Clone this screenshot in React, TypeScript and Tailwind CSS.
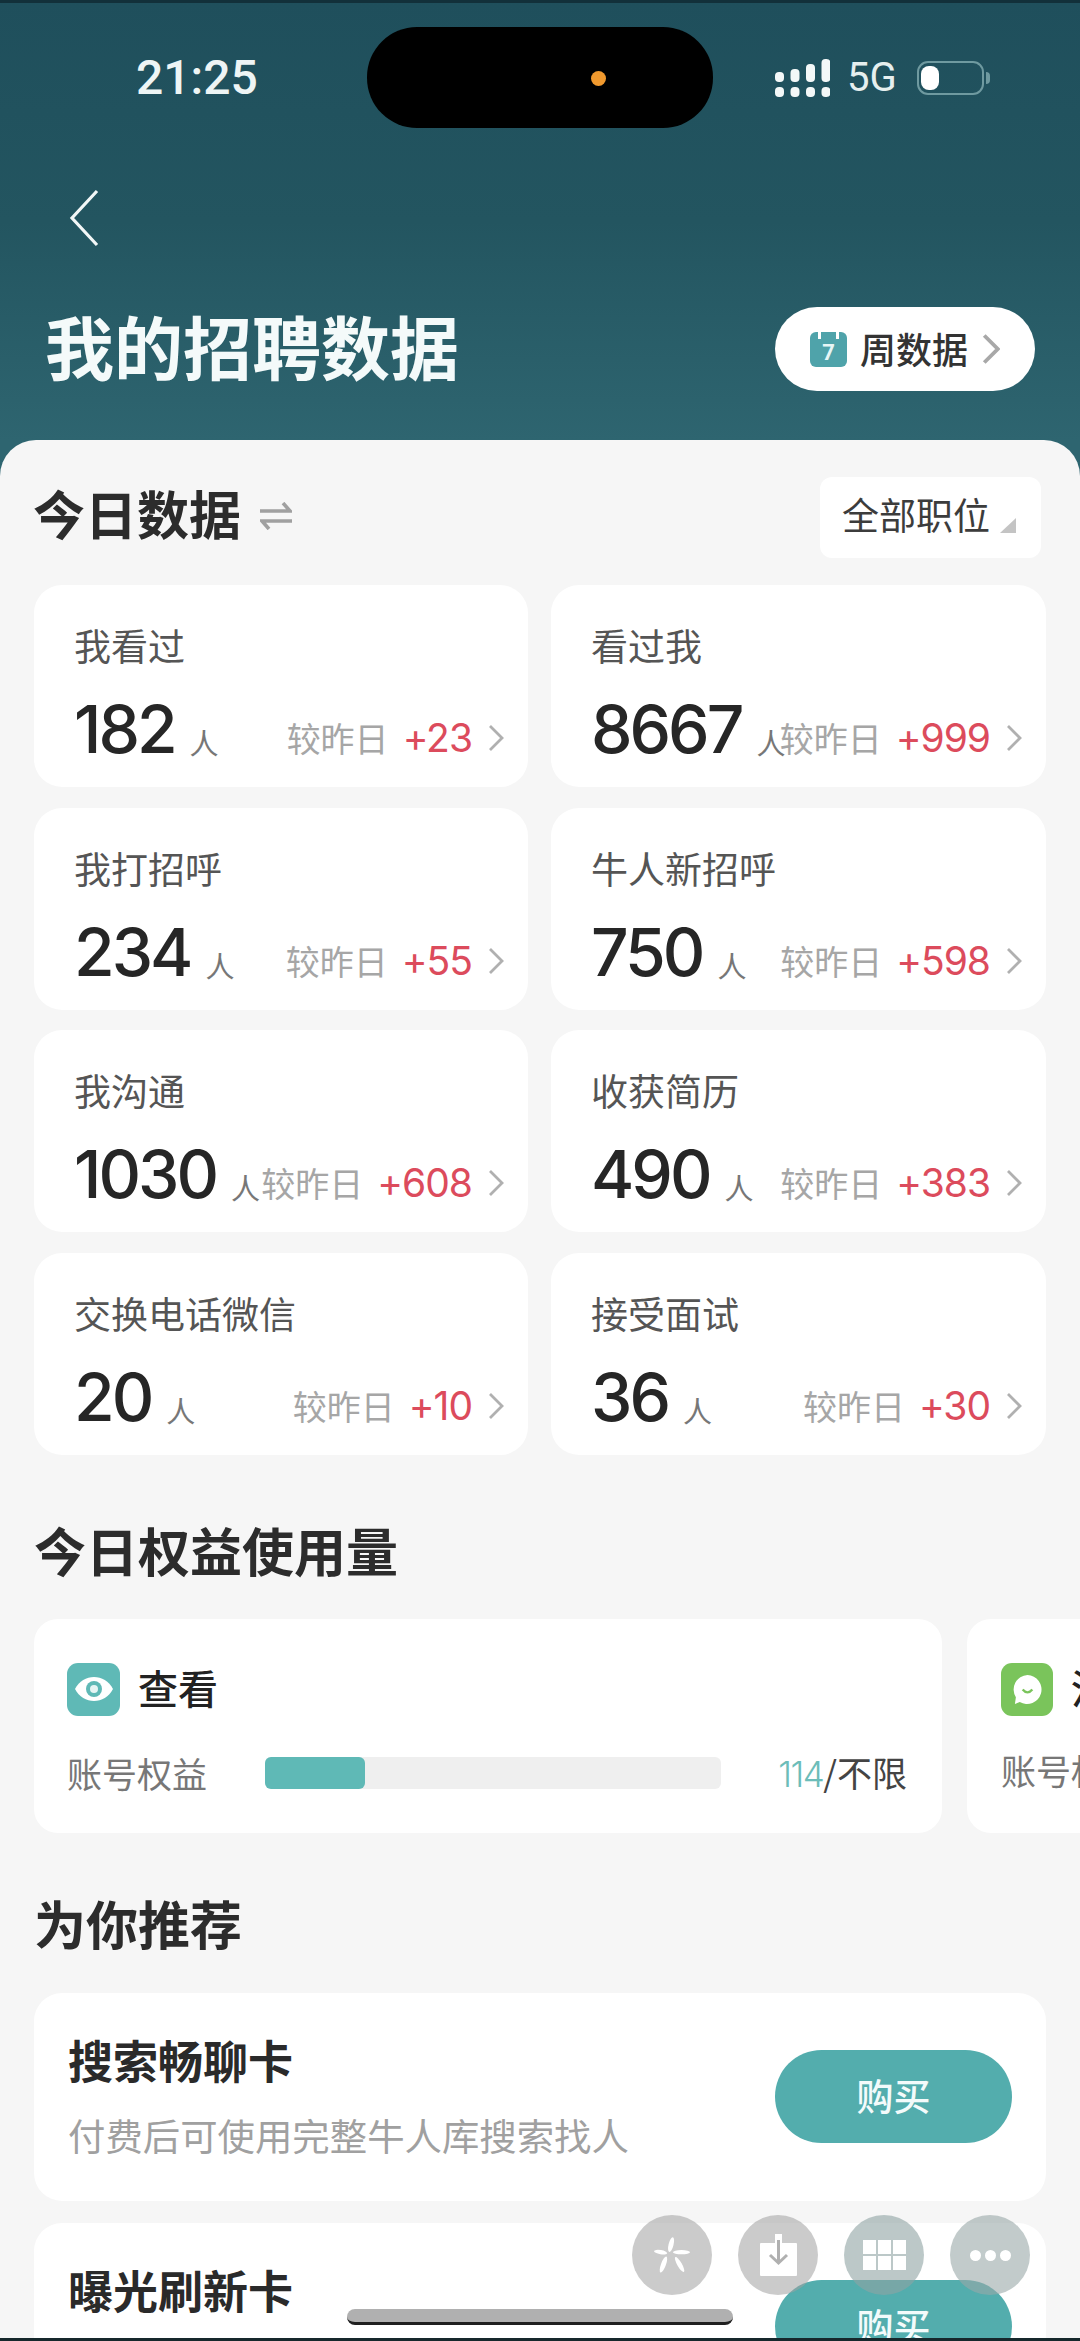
import * as React from 'react'

type Stat = { label: string; value: string; delta: string }

const stats: Stat[] = [
  { label: '我看过', value: '182', delta: '+23' },
  { label: '看过我', value: '8667', delta: '+999' },
  { label: '我打招呼', value: '234', delta: '+55' },
  { label: '牛人新招呼', value: '750', delta: '+598' },
  { label: '我沟通', value: '1030', delta: '+608' },
  { label: '收获简历', value: '490', delta: '+383' },
  { label: '交换电话微信', value: '20', delta: '+10' },
  { label: '接受面试', value: '36', delta: '+30' },
]

function Chevron({ className }: { className: string }) {
  return (
    <svg viewBox="0 0 16 28" className={className} fill="none" stroke="currentColor" strokeWidth="2.8">
      <path d="M2 2 L14 14 L2 26" />
    </svg>
  )
}

function StatusBar() {
  // top of the upper segment for each signal column
  const tops = [13, 10, 5, 0]
  return (
    <div className="flex h-[125px] items-center pt-[24px]">
      <span className="ml-[136px] w-[231px] font-['Roboto'] text-[48px] font-medium leading-none text-[#eef5f5]">21:25</span>
      <div className="relative h-[101px] w-[346px] rounded-[50px] bg-black">
        <div className="absolute left-[224px] top-[44px] h-[15px] w-[15px] rounded-full bg-[#f0992e]" />
      </div>
      <svg viewBox="0 0 55 38" className="ml-[62px] h-[38px] w-[55px]" fill="#f4f8f8">
        {tops.map((t, i) => (
          <g key={i}>
            <rect x={i * 15.5} y="28" width="9" height="10" rx="4" />
            <rect x={i * 15.5} y={t} width="9" height={23 - t} rx="4" />
          </g>
        ))}
      </svg>
      <span className="ml-[17px] font-['Roboto'] text-[40px] leading-none text-[#e6efef]">5G</span>
      <div className="relative ml-[20px] h-[34px] w-[67px] rounded-[11px] border-2 border-[#6f9aa0]">
        <div className="absolute left-[2px] top-[3px] h-[24px] w-[18px] rounded-[8px] bg-white" />
        <div className="absolute -right-[8px] top-[9px] h-[12px] w-[4px] rounded-r-[4px] bg-[#6f9aa0]" />
      </div>
    </div>
  )
}

function Header() {
  return (
    <div className="h-[440px] border-t-[3px] border-[#12303a] bg-gradient-to-b from-[#1f4f5c] via-[#235560] to-[#2e6570]">
      <StatusBar />
      <svg viewBox="0 0 30 58" className="ml-[69px] mt-[61px] h-[58px] w-[30px]" fill="none" stroke="#f2f7f7" strokeWidth="3.2">
        <path d="M28 2 L3 29 L28 56" />
      </svg>
      <div className="mt-[60px] flex items-center justify-between pl-[45px] pr-[45px]">
        <h1 className="pb-[8px] text-[69px] font-bold leading-none text-[#f4fafa]">我的招聘数据</h1>
        <div className="flex h-[84px] w-[260px] items-center rounded-[42px] bg-white pl-[35px]">
          <div className="relative h-[35px] w-[37px] rounded-[6px] bg-[#4fa3aa] pt-[9px] text-center font-['Roboto'] text-[22px] font-bold leading-[24px] text-[#e6f6f6]">
            <div className="absolute left-[8px] top-0 h-[7px] w-[3px] bg-white" />
            <div className="absolute right-[8px] top-0 h-[7px] w-[3px] bg-white" />
            7
          </div>
          <span className="ml-[13px] pb-[3px] text-[36px] font-medium leading-none text-[#333]">周数据</span>
          <svg viewBox="0 0 16 28" className="ml-[14px] h-[34px] w-[18px] text-[#a8a8a8]" fill="none" stroke="currentColor" strokeWidth="3.4">
            <path d="M2 2 L14 14 L2 26" />
          </svg>
        </div>
      </div>
    </div>
  )
}

function StatCard({ stat }: { stat: Stat }) {
  return (
    <div className="h-[202px] rounded-[28px] bg-white pl-[40px] pr-[24px] pt-[40px]">
      <div className="text-[37px] leading-[40px] text-[#555]">{stat.label}</div>
      <div className="mt-[33px] flex items-end">
        <div className="flex min-w-0 flex-1 items-end">
          <span className="font-['Inter'] text-[66px] font-medium leading-[62px] tracking-[-3px] text-[#262626]">{stat.value}</span>
          <span className="ml-[15px] text-[29px] leading-[36px] text-[#777]">人</span>
        </div>
        <div className="flex shrink-0 items-center">
          <span className="text-[34px] leading-[44px] text-[#a6a6a6]">较昨日</span>
          <span className="ml-[14px] font-['Inter'] text-[39px] leading-[44px] tracking-[-1px] text-[#dc4b5c]">{stat.delta}</span>
          <Chevron className="ml-[16px] h-[30px] w-[16px] text-[#b0b0b0]" />
        </div>
      </div>
    </div>
  )
}

function UsageCard() {
  return (
    <div className="h-[214px] w-[908px] shrink-0 rounded-[24px] bg-white pl-[33px] pr-[35px] pt-[44px]">
      <div className="flex items-center">
        <div className="flex h-[53px] w-[53px] items-center justify-center rounded-[11px] bg-[#5fb9b6]">
          <svg viewBox="0 0 38 26" className="h-[26px] w-[38px]">
            <path d="M0 13 C8 -3 30 -3 38 13 C30 29 8 29 0 13 Z" fill="#fff" />
            <circle cx="19" cy="13" r="8" fill="#5fb9b6" />
            <circle cx="19" cy="13" r="4" fill="#e6f5f4" />
          </svg>
        </div>
        <span className="ml-[18px] pb-[4px] text-[40px] font-medium leading-none text-[#222]">查看</span>
      </div>
      <div className="mt-[38px] flex items-center">
        <span className="w-[198px] text-[35px] leading-none text-[#777]">账号权益</span>
        <div className="h-[32px] w-[456px] rounded-[6px] bg-[#efefef]">
          <div className="h-[32px] w-[100px] rounded-[6px] bg-[#5fb9b6]" />
        </div>
        <span className="ml-auto text-[35px] leading-none text-[#444]">
          <span className="font-['Inter'] font-light tracking-[-1.5px] text-[#6cbdb9]">114</span>/不限
        </span>
      </div>
    </div>
  )
}

function NextUsageCard() {
  return (
    <div className="h-[214px] w-[908px] shrink-0 rounded-[24px] bg-white pl-[34px] pt-[44px]">
      <div className="flex items-center">
        <div className="flex h-[53px] w-[52px] items-center justify-center rounded-[11px] bg-[#7ac45b]">
          <svg viewBox="0 0 32 32" className="h-[31px] w-[31px]">
            <path d="M16 1 A15 15 0 1 1 8 29 L3 31 L4 24 A15 15 0 0 1 16 1 Z" fill="#fff" />
            <path d="M11 16 Q16 22 21 16" fill="none" stroke="#7ac45b" strokeWidth="2.4" />
          </svg>
        </div>
        <span className="ml-[18px] pb-[4px] text-[40px] font-medium leading-none text-[#222]">沟通</span>
      </div>
      <div className="mt-[38px] text-[35px] leading-[32px] text-[#777]">账号权益</div>
    </div>
  )
}

function ProductCard({ title, desc, className }: { title: string; desc?: string; className: string }) {
  return (
    <div className={`${className} flex items-start justify-between rounded-[28px] bg-white pl-[34px] pr-[34px]`}>
      <div className="pt-[43px]">
        <div className="text-[45px] font-bold leading-[48px] text-[#2a2a2a]">{title}</div>
        {desc && <div className="mt-[29px] text-[37.4px] leading-[44px] text-[#a0a0a0]">{desc}</div>}
      </div>
      <div className="mt-[57px] flex h-[93px] w-[237px] items-center justify-center rounded-[47px] bg-[#53adad] text-[37px] font-medium text-[#f3fbfb]">
        购买
      </div>
    </div>
  )
}

function FloatingTools() {
  return (
    <div className="absolute left-[632px] top-[2215px] flex gap-[26px]">
      <div className="flex h-[80px] w-[80px] items-center justify-center rounded-full bg-[#a0a0a0]/55">
        <svg viewBox="0 0 40 40" className="h-[38px] w-[38px]" fill="#fff">
          <ellipse cx="19" cy="9" rx="2.6" ry="8" transform="rotate(14 19 9)" />
          <ellipse cx="30" cy="17" rx="9" ry="2.2" />
          <ellipse cx="8" cy="17" rx="7" ry="2.2" transform="rotate(10 8 17)" />
          <ellipse cx="28" cy="30" rx="2.4" ry="9" transform="rotate(-30 28 30)" />
          <ellipse cx="11" cy="30" rx="2.6" ry="9" transform="rotate(20 11 30)" />
        </svg>
      </div>
      <div className="flex h-[80px] w-[80px] items-center justify-center rounded-full bg-[#a0a0a0]/55">
        <svg viewBox="0 0 37 42" className="h-[42px] w-[37px]">
          <path d="M1 9 H15 V0 H22 V9 H36 Q37 9 37 10 V41 Q37 42 36 42 H1 Q0 42 0 41 V10 Q0 9 1 9 Z" fill="#fff" />
          <path d="M18.5 6 V29 M10 21 L18.5 29 L27 21" fill="none" stroke="#b0b0b0" strokeWidth="3" />
        </svg>
      </div>
      <div className="flex h-[80px] w-[80px] items-center justify-center rounded-full bg-[#8fa3a3]/60">
        <div className="grid grid-cols-3 gap-[2px]">
          {[0, 1, 2, 3, 4, 5].map((i) => (
            <div key={i} className="h-[14px] w-[13px] bg-white" />
          ))}
        </div>
      </div>
      <div className="flex h-[80px] w-[80px] items-center justify-center gap-[4px] rounded-full bg-[#9aa8a8]/60">
        {[0, 1, 2].map((i) => (
          <div key={i} className="h-[11px] w-[11px] rounded-full bg-white" />
        ))}
      </div>
    </div>
  )
}

export default function App() {
  return (
    <div className="relative h-[2341px] w-[1080px] overflow-hidden bg-[#2e6570] font-['Noto_Sans_CJK_SC','Noto_Sans',sans-serif]">
      <Header />
      <div className="h-[1901px] rounded-t-[36px] bg-[#f6f6f6] pl-[34px] pr-[34px]">
        <div className="flex h-[145px] items-center justify-between pt-[9px]">
          <div className="-ml-[1px] flex items-center pb-[8px]">
            <h2 className="text-[52px] font-bold leading-none text-[#2c2c2c]">今日数据</h2>
            <svg viewBox="0 0 32 28" className="ml-[19px] mt-[6px] h-[28px] w-[32px]" fill="none" stroke="#a0a0a0" strokeWidth="3.6">
              <path d="M0 9 H30 L23 1 M32 19 H2 L9 27" />
            </svg>
          </div>
          <div className="relative mr-[5px] flex h-[81px] w-[221px] items-center rounded-[12px] bg-white pb-[6px] pl-[22px] text-[37px] leading-none text-[#3c3c3c]">
            全部职位
            <div className="absolute right-[25px] top-[41px] h-0 w-0 border-b-[15px] border-l-[16px] border-b-[#c4c4c4] border-l-transparent" />
          </div>
        </div>
        <div className="grid grid-cols-[494px_495px] gap-x-[23px] gap-y-[20.5px]">
          {stats.map((s) => (
            <StatCard key={s.label} stat={s} />
          ))}
        </div>
        <h2 className="mt-[65px] text-[52px] font-bold leading-[60px] text-[#2c2c2c]">今日权益使用量</h2>
        <div className="mt-[39px] flex gap-[25px]">
          <UsageCard />
          <NextUsageCard />
        </div>
        <h2 className="mt-[60px] text-[52px] font-bold leading-[60px] text-[#2c2c2c]">为你推荐</h2>
        <div className="mt-[40px] flex flex-col gap-[22px]">
          <ProductCard className="h-[208px]" title="搜索畅聊卡" desc="付费后可使用完整牛人库搜索找人" />
          <ProductCard className="h-[208px]" title="曝光刷新卡" />
        </div>
      </div>
      <FloatingTools />
      <div className="absolute left-[347px] top-[2309px] h-[16px] w-[386px] rounded-[8px] border-b-[3px] border-[#1f1f1f] bg-[#b0b0b0]" />
      <div className="absolute bottom-0 left-0 h-[3px] w-full bg-[#16282c]" />
    </div>
  )
}
